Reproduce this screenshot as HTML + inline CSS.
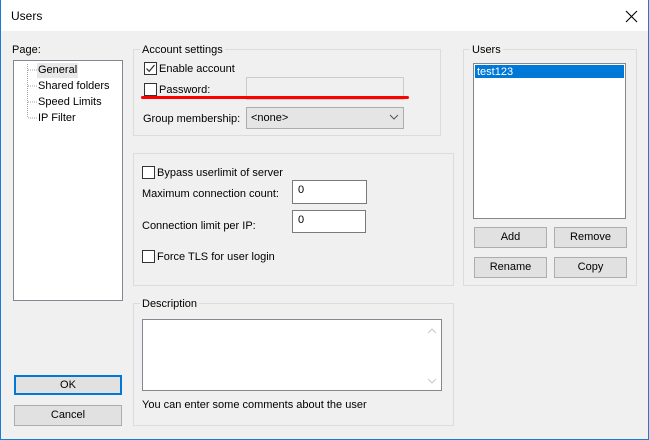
<!DOCTYPE html>
<html><head><style>
*{margin:0;padding:0;box-sizing:border-box}
body{width:649px;height:440px;overflow:hidden;background:#fff;font-family:"Liberation Sans",sans-serif;font-size:11px;color:#000;position:relative}
.a{position:absolute;white-space:nowrap;line-height:15px}
.win{position:absolute;left:0;top:0;width:649px;height:440px;border:1px solid #1c7ad6;border-top:none}
.content{position:absolute;left:1px;top:31px;width:647px;height:408px;background:#f0f0f0}
.grp{position:absolute;border:1px solid #dcdcdc}
.lbl{position:absolute;background:#f0f0f0;padding:0 2px;line-height:14px}
.cb{position:absolute;width:13px;height:13px;border:1px solid #333;background:#fff}
.inp{position:absolute;background:#fff;border:1px solid #7a7a7a}
.btn{position:absolute;background:#e1e1e1;border:1px solid #adadad;text-align:center;line-height:19px}
</style></head><body>
<div class="win"></div>
<div class="a" style="left:11px;top:9px;font-size:12px">Users</div>
<svg class="a" style="left:625px;top:10px" width="13" height="13"><path d="M1 1L12 12M12 1L1 12" stroke="#000" stroke-width="1.1"/></svg>
<div class="content"></div>

<div class="a" style="left:12px;top:43px">Page:</div>
<div class="inp" style="left:13px;top:60px;width:110px;height:241px;border-color:#828790"></div>
<svg class="a" style="left:26px;top:64px" width="14" height="60"><path d="M1.5 0V54M2 6H12M2 22H12M2 38H12M2 54H12" stroke="#a0a0a0" stroke-dasharray="1 1"/></svg>
<div class="a" style="left:37px;top:63px;background:#e8e8e8;padding:0 1px">General</div>
<div class="a" style="left:38px;top:79px">Shared folders</div>
<div class="a" style="left:38px;top:95px">Speed Limits</div>
<div class="a" style="left:38px;top:111px">IP Filter</div>

<div class="grp" style="left:133px;top:49px;width:308px;height:87px"></div>
<div class="lbl" style="left:140px;top:43px">Account settings</div>
<div class="cb" style="left:144px;top:62px"></div>
<svg class="a" style="left:145px;top:63px" width="11" height="11"><path d="M1.5 5.5L4.2 8.3L9.5 2" stroke="#333" stroke-width="1.2" fill="none"/></svg>
<div class="a" style="left:159px;top:62px">Enable account</div>
<div class="cb" style="left:144px;top:83px"></div>
<div class="a" style="left:159px;top:83px">Password:</div>
<div class="a" style="left:246px;top:77px;width:158px;height:23px;border:1px solid #ccc;background:#f0f0f0"></div>
<div class="a" style="left:141px;top:96px;width:268px;height:3px;background:#ff0000;border-radius:2px"></div>
<div class="a" style="left:143px;top:112px">Group membership:</div>
<div class="a" style="left:246px;top:107px;width:158px;height:22px;background:#e5e5e5;border:1px solid #adadad;padding:3px 0 0 4px">&lt;none&gt;</div>
<svg class="a" style="left:389px;top:114px" width="10" height="7"><path d="M1 1L5 5L9 1" stroke="#555" fill="none"/></svg>

<div class="grp" style="left:133px;top:153px;width:321px;height:133px"></div>
<div class="cb" style="left:142px;top:166px"></div>
<div class="a" style="left:157px;top:166px">Bypass userlimit of server</div>
<div class="a" style="left:142px;top:187px">Maximum connection count:</div>
<div class="inp" style="left:292px;top:180px;width:75px;height:24px;padding:2px 0 0 5px;line-height:15px">0</div>
<div class="a" style="left:142px;top:219px">Connection limit per IP:</div>
<div class="inp" style="left:292px;top:210px;width:74px;height:23px;padding:2px 0 0 5px;line-height:15px">0</div>
<div class="cb" style="left:142px;top:250px"></div>
<div class="a" style="left:157px;top:250px">Force TLS for user login</div>

<div class="grp" style="left:133px;top:303px;width:321px;height:123px"></div>
<div class="lbl" style="left:140px;top:297px">Description</div>
<div class="inp" style="left:142px;top:319px;width:300px;height:72px;border-color:#828790"></div>
<svg class="a" style="left:427px;top:327px" width="10" height="60"><path d="M1 6L5 2L9 6M1 52L5 56L9 52" stroke="#c8c8c8" fill="none"/></svg>
<div class="a" style="left:142px;top:398px">You can enter some comments about the user</div>

<div class="btn" style="left:14px;top:375px;width:108px;height:20px;border:2px solid #0078d7;line-height:17px">OK</div>
<div class="btn" style="left:14px;top:405px;width:108px;height:21px">Cancel</div>

<div class="grp" style="left:463px;top:49px;width:174px;height:237px"></div>
<div class="lbl" style="left:470px;top:43px">Users</div>
<div class="inp" style="left:473px;top:63px;width:153px;height:156px;border-color:#828790"></div>
<div class="a" style="left:475px;top:65px;width:149px;height:13px;background:#0078d7;color:#fff;padding-left:2px;line-height:14px">test123</div>
<div class="btn" style="left:474px;top:227px;width:73px;height:21px">Add</div>
<div class="btn" style="left:554px;top:227px;width:73px;height:21px">Remove</div>
<div class="btn" style="left:474px;top:257px;width:73px;height:21px">Rename</div>
<div class="btn" style="left:554px;top:257px;width:73px;height:21px">Copy</div>
</body></html>
